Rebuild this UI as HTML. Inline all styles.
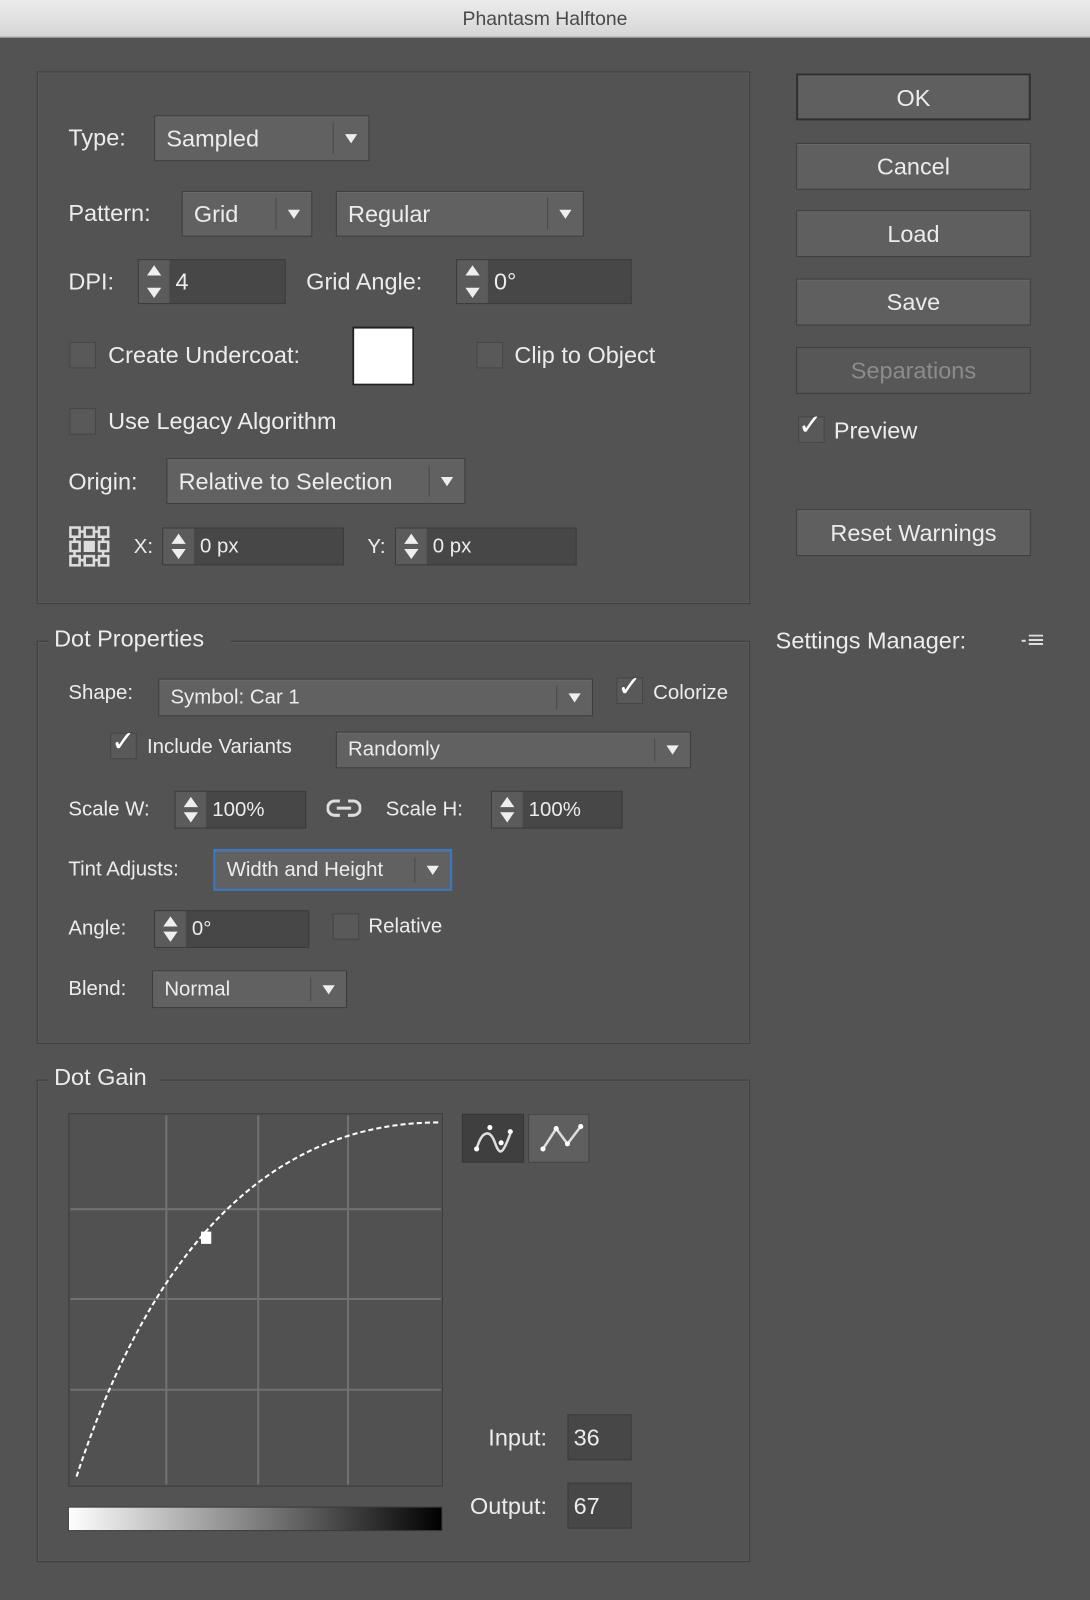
<!DOCTYPE html>
<html><head><meta charset="utf-8"><style>
*{box-sizing:border-box;margin:0;padding:0}
html,body{width:1090px;height:1600px;overflow:hidden;background:#535353}
#w{position:absolute;left:0;top:0;width:1068px;height:1568px;transform:scale(1.0206,1.0204);transform-origin:0 0;background:#535353;font-family:"Liberation Sans",sans-serif;color:#ececec}
.a{position:absolute}
.t{position:absolute;white-space:nowrap;font-size:23px;line-height:1;transform:translateY(-50%)}
.s{font-size:20px}
.dd{position:absolute;background:#616161;border:1px solid #3c3c3c;box-shadow:inset 0 1px 0 #6c6c6c}
.dd span{position:absolute;left:11px;top:50%;transform:translateY(-50%);white-space:nowrap}
.dd i{position:absolute;top:6px;bottom:6px;width:1px;background:#4a4a4a;right:34px}
.dd b{position:absolute;right:11px;top:50%;transform:translateY(-50%);width:0;height:0;border-left:6px solid transparent;border-right:6px solid transparent;border-top:9px solid #eee}
.sp{position:absolute;background:#474747;border:1px solid #3b3b3b}
.sp .st{position:absolute;left:0;top:0;bottom:0;width:30px;background:#5b5b5b}
.sp .st:before{content:"";position:absolute;left:8px;top:5px;border-left:7px solid transparent;border-right:7px solid transparent;border-bottom:10px solid #eee}
.sp .st:after{content:"";position:absolute;left:8px;bottom:5px;border-left:7px solid transparent;border-right:7px solid transparent;border-top:10px solid #eee}
.sp span{position:absolute;left:36px;top:50%;transform:translateY(-50%);white-space:nowrap}
.cb{position:absolute;width:26px;height:26px;background:#595959;border:1px solid #454545}
.ck{position:absolute;font-size:28px;line-height:1;color:#fff;font-family:"DejaVu Sans",sans-serif}
.btn{position:absolute;left:780px;width:230px;height:46px;background:#5f5f5f;border:1px solid #3d3d3d;box-shadow:inset 0 1px 0 #6a6a6a;text-align:center;line-height:44px;font-size:23px}
.pnl{position:absolute;border:1px solid #3e3e3e;box-shadow:inset 0 0 0 1px #5b5b5b}
</style></head><body><div id="w">
<div class="a" style="left:0;top:0;width:1068px;height:37px;background:linear-gradient(#ececec,#d6d6d6);border-bottom:1px solid #b0b0b0"></div>
<div class="t" style="left:0;width:1068px;text-align:center;top:19px;color:#4a4a4a;font-size:19px">Phantasm Halftone</div>

<div class="pnl" style="left:36px;top:70px;width:699px;height:522px"></div>
<div class="t" style="left:67px;top:135px">Type:</div>
<div class="dd" style="left:151px;top:113px;width:211px;height:45px;font-size:23px"><span>Sampled</span><i></i><b></b></div>
<div class="t" style="left:67px;top:209px">Pattern:</div>
<div class="dd" style="left:178px;top:187px;width:128px;height:45px;font-size:23px"><span>Grid</span><i></i><b></b></div>
<div class="dd" style="left:329px;top:187px;width:243px;height:45px;font-size:23px"><span>Regular</span><i></i><b></b></div>
<div class="t" style="left:67px;top:276px">DPI:</div>
<div class="sp" style="left:135px;top:254px;width:145px;height:44px;font-size:23px"><div class="st"></div><span>4</span></div>
<div class="t" style="left:300px;top:276px">Grid Angle:</div>
<div class="sp" style="left:447px;top:254px;width:172px;height:44px;font-size:23px"><div class="st"></div><span>0°</span></div>
<div class="cb" style="left:68px;top:335px"></div>
<div class="t" style="left:106px;top:348px">Create Undercoat:</div>
<div class="a" style="left:345px;top:320px;width:61px;height:58px;background:#fff;border:2px solid #222"></div>
<div class="cb" style="left:467px;top:335px"></div>
<div class="t" style="left:504px;top:348px">Clip to Object</div>
<div class="cb" style="left:68px;top:400px"></div>
<div class="t" style="left:106px;top:413px">Use Legacy Algorithm</div>
<div class="t" style="left:67px;top:472px">Origin:</div>
<div class="dd" style="left:163px;top:449px;width:293px;height:45px;font-size:23px"><span>Relative to Selection</span><i></i><b></b></div>
<svg class="a" style="left:67px;top:515px" width="42" height="42" viewBox="0 0 42 42"><g fill="none" stroke="#ddd" stroke-width="2.5"><rect x="2" y="2" width="9" height="9"/><rect x="16" y="2" width="9" height="9"/><rect x="30" y="2" width="9" height="9"/><rect x="2" y="16" width="9" height="9"/><rect x="30" y="16" width="9" height="9"/><rect x="2" y="30" width="9" height="9"/><rect x="16" y="30" width="9" height="9"/><rect x="30" y="30" width="9" height="9"/><path d="M11 6h5M25 6h5M11 34h5M25 34h5M6 11v5M6 25v5M34 11v5M34 25v5"/></g><rect x="15" y="15" width="11" height="11" fill="#ddd"/></svg>
<div class="t s" style="left:131px;top:536px">X:</div>
<div class="sp" style="left:159px;top:517px;width:178px;height:37px;font-size:20px"><div class="st" style="width:30px"></div><span>0 px</span></div>
<div class="t s" style="left:360px;top:536px">Y:</div>
<div class="sp" style="left:387px;top:517px;width:178px;height:37px;font-size:20px"><div class="st"></div><span>0 px</span></div>

<div class="btn" style="top:72px;border:2px solid #2f2f2f">OK</div>
<div class="btn" style="top:140px">Cancel</div>
<div class="btn" style="top:206px">Load</div>
<div class="btn" style="top:273px">Save</div>
<div class="btn" style="top:340px;background:#575757;color:#8c8c8c;box-shadow:none">Separations</div>
<div class="cb" style="left:782px;top:408px"></div>
<div class="ck" style="left:782px;top:403px">✓</div>
<div class="t" style="left:817px;top:422px">Preview</div>
<div class="btn" style="top:499px">Reset Warnings</div>
<div class="t" style="left:760px;top:628px">Settings Manager:</div>
<div class="a" style="left:1001px;top:627px;width:4px;height:2px;background:#ddd"></div>
<div class="a" style="left:1008px;top:622px;width:14px;height:12px;background:repeating-linear-gradient(#ddd 0 2px,transparent 2px 4px)"></div>

<div class="pnl" style="left:36px;top:628px;width:699px;height:395px"></div>
<div class="a" style="left:48px;top:612px;width:178px;height:30px;background:#535353"></div>
<div class="t" style="left:53px;top:626px">Dot Properties</div>
<div class="t s" style="left:67px;top:679px">Shape:</div>
<div class="dd" style="left:155px;top:665px;width:426px;height:37px;font-size:20px"><span>Symbol: Car 1</span><i></i><b></b></div>
<div class="cb" style="left:604px;top:664px"></div>
<div class="ck" style="left:605px;top:659px">✓</div>
<div class="t s" style="left:640px;top:679px">Colorize</div>
<div class="cb" style="left:108px;top:718px"></div>
<div class="ck" style="left:109px;top:713px">✓</div>
<div class="t s" style="left:144px;top:732px">Include Variants</div>
<div class="dd" style="left:329px;top:717px;width:348px;height:36px;font-size:20px"><span>Randomly</span><i></i><b></b></div>
<div class="t s" style="left:67px;top:793px">Scale W:</div>
<div class="sp" style="left:171px;top:775px;width:129px;height:37px;font-size:20px"><div class="st"></div><span>100%</span></div>
<svg class="a" style="left:320px;top:781px" width="34" height="22" viewBox="0 0 34 22"><g fill="none" stroke="#ddd" stroke-width="3"><path d="M13 4H8a7 7 0 0 0 0 14h5M21 4h5a7 7 0 0 1 0 14h-5M10 11h14"/></g></svg>
<div class="t s" style="left:378px;top:793px">Scale H:</div>
<div class="sp" style="left:481px;top:775px;width:129px;height:37px;font-size:20px"><div class="st"></div><span>100%</span></div>
<div class="t s" style="left:67px;top:852px">Tint Adjusts:</div>
<div class="dd" style="left:209px;top:832px;width:234px;height:41px;font-size:20px;border:2px solid #3b78c4"><span>Width and Height</span><i></i><b></b></div>
<div class="t s" style="left:67px;top:910px">Angle:</div>
<div class="sp" style="left:151px;top:892px;width:152px;height:37px;font-size:20px"><div class="st"></div><span>0°</span></div>
<div class="cb" style="left:326px;top:895px"></div>
<div class="t s" style="left:361px;top:908px">Relative</div>
<div class="t s" style="left:67px;top:969px">Blend:</div>
<div class="dd" style="left:149px;top:951px;width:191px;height:37px;font-size:20px"><span>Normal</span><i></i><b></b></div>

<div class="pnl" style="left:36px;top:1058px;width:699px;height:473px"></div>
<div class="a" style="left:48px;top:1042px;width:108px;height:30px;background:#535353"></div>
<div class="t" style="left:53px;top:1056px">Dot Gain</div>
<svg class="a" style="left:0;top:0" width="1068" height="1568">
<rect x="67.5" y="1091.5" width="366" height="365" fill="#515151" stroke="#3d3d3d"/>
<g stroke="#717171" stroke-width="2"><path d="M163 1093v362M253 1093v362M341 1093v362M69 1185h363M69 1273h363M69 1362h363"/></g>
<path d="M75 1447 C130 1280 230 1100 430 1100" fill="none" stroke="#fff" stroke-width="2" stroke-dasharray="5 3"/>
<rect x="197" y="1207" width="10" height="12" fill="#fff"/>
<defs><linearGradient id="g"><stop offset="0" stop-color="#fff"/><stop offset="1" stop-color="#000"/></linearGradient></defs>
<rect x="67" y="1477" width="366" height="23" fill="url(#g)" stroke="#3a3a3a"/>
<rect x="453" y="1092" width="60" height="47" fill="#3f3f3f" stroke="#363636"/>
<rect x="518" y="1092" width="59" height="47" fill="#5f5f5f" stroke="#444"/>
<path d="M467 1126c5-18 13-20 18-6s8 10 15-9" fill="none" stroke="#ddd" stroke-width="2.5"/>
<g fill="#fff"><circle cx="467" cy="1126" r="2.5"/><circle cx="480" cy="1105" r="2.5"/><circle cx="491" cy="1120" r="2.5"/><circle cx="500" cy="1109" r="2.5"/></g>
<path d="M532 1126l13-20 11 15 13-17" fill="none" stroke="#ddd" stroke-width="2.5"/>
<g fill="#fff"><circle cx="532" cy="1126" r="2.5"/><circle cx="545" cy="1106" r="2.5"/><circle cx="556" cy="1121" r="2.5"/><circle cx="569" cy="1104" r="2.5"/></g>
</svg>
<div class="t" style="left:430px;width:106px;text-align:right;top:1409px">Input:</div>
<div class="sp" style="left:556px;top:1386px;width:63px;height:45px;font-size:23px"><span style="left:5px">36</span></div>
<div class="t" style="left:430px;width:106px;text-align:right;top:1476px">Output:</div>
<div class="sp" style="left:556px;top:1453px;width:63px;height:45px;font-size:23px"><span style="left:5px">67</span></div>
</div></body></html>
